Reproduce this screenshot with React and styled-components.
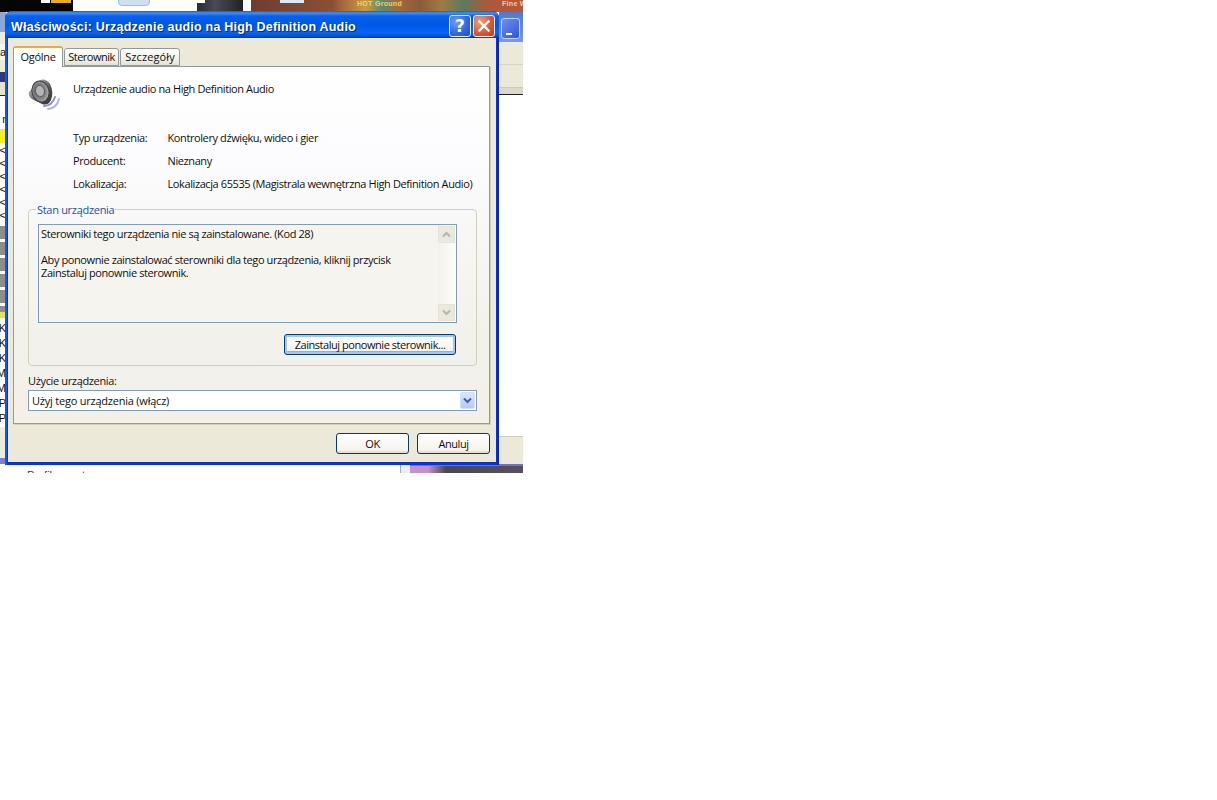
import React from "react";
import styled, { createGlobalStyle } from "styled-components";

const Global = createGlobalStyle`
  html, body { margin: 0; padding: 0; background: #fff; }
  body { font-family: "Liberation Sans", Arial, sans-serif; }
`;

const UI = `"Open Sans", "Liberation Sans", Arial, sans-serif`;

const Desktop = styled.div`
  position: relative;
  width: 523px;
  height: 473px;
  overflow: hidden;
  display: flex;
  flex-direction: column;
  background: #fff;
`;

const TopStrip = styled.div`
  height: 12px;
  flex: none;
  display: flex;
`;
const TopSegment = styled.div`
  width: ${(p) => p.$w}px;
  flex: none;
  background: ${(p) => p.$bg};
  position: relative;
  overflow: hidden;
`;
const Pill = styled.div`
  position: absolute;
  left: 45px;
  top: -4px;
  width: 30px;
  height: 8px;
  border-radius: 4px;
  background: #cfe0f2;
  border: 1px solid #9fbfe0;
`;
const WhiteBit = styled.div`
  position: absolute;
  left: ${(p) => p.$x}px;
  top: 0;
  width: ${(p) => p.$w}px;
  height: 3px;
  background: ${(p) => p.$c || "#fff"};
`;
const PosterText = styled.span`
  position: absolute;
  left: ${(p) => p.$x}px;
  top: 0;
  font: bold 7px "Liberation Sans", sans-serif;
  letter-spacing: 0.3px;
  color: ${(p) => p.$c};
  white-space: nowrap;
`;

const Middle = styled.div`
  flex: 1;
  display: flex;
  justify-content: space-between;
  min-height: 0;
`;
const LeftSliver = styled.div`
  width: 6px;
  display: flex;
  flex-direction: column;
  overflow: hidden;
`;
const SliverRow = styled.div`
  height: ${(p) => p.$h}px;
  flex: none;
  background: ${(p) => p.$bg || "#fff"};
  display: flex;
  justify-content: flex-end;
  align-items: center;
  overflow: hidden;
  font: 11px "Liberation Sans", sans-serif;
  color: #111;
`;
const RightSliver = styled.div`
  width: 24px;
  display: flex;
  flex-direction: column;
`;
const RightBand = styled.div`
  box-sizing: border-box;
  height: ${(p) => p.$h}px;
  flex: none;
  background: ${(p) => p.$bg};
  border-bottom: ${(p) => (p.$line ? `1px solid ${p.$line}` : "none")};
  position: relative;
`;
const BackMinimize = styled.div`
  position: absolute;
  left: 2px;
  top: 6px;
  width: 17px;
  height: 19px;
  border: 1px solid #c4d3f4;
  border-radius: 3px;
  background: linear-gradient(135deg, #6f8ff0, #2f56d8);
  &::after {
    content: "";
    position: absolute;
    left: 4px;
    bottom: 3px;
    width: 6px;
    height: 2px;
    background: #fff;
  }
`;

const BottomStrip = styled.div`
  height: 9px;
  flex: none;
  display: flex;
  align-items: stretch;
`;
const BottomLeft = styled.div`
  width: 401px;
  flex: none;
  padding: 4px 0 0 27px;
  box-sizing: border-box;
  overflow: hidden;
  border-right: 1px solid #aaa;
  font: 11px/14px "Liberation Sans", sans-serif;
  color: #1a3d8f;
`;
const BottomGap = styled.div`
  width: 9px;
  flex: none;
  background: #efeee8;
`;
const BottomPhoto = styled.div`
  flex: 1;
  border-top: 2px solid #6f6fd0;
  background: linear-gradient(90deg, #c590c8 0, #c590c8 18px, #4a4650 36px, #55525a 100%);
`;

const Dialog = styled.section`
  position: absolute;
  left: 5px;
  top: 11px;
  width: 494px;
  height: 454px;
  box-sizing: border-box;
  border-radius: 7px 7px 0 0;
  background: #0831d9;
  padding: 0 3px 3px;
  display: flex;
  flex-direction: column;
  box-shadow: inset 2px 0 0 #1656e6, inset -2px 0 0 #0a2aa8;
`;
const TitleBar = styled.header`
  height: 27px;
  flex: none;
  margin: 0 -3px;
  padding: 0 4px 0 6px;
  border-radius: 7px 7px 0 0;
  display: flex;
  align-items: center;
  gap: 2px;
  background: linear-gradient(180deg, #0a5be4 0, #3a93ff 2px, #0a60ec 5px, #0058e6 50%, #0066f8 80%, #0a50d8 92%, #003bb8 100%);
`;
const Title = styled.h1`
  flex: 1;
  margin: 4px 0 0;
  font: bold 12.5px "Liberation Sans", sans-serif;
  letter-spacing: 0.21px;
  color: #fff;
  text-shadow: 1px 1px 1px #0a1f80;
  white-space: nowrap;
`;
const CaptionButton = styled.button`
  width: 22px;
  height: 22px;
  margin: 2px 0 0;
  padding: 0;
  border: 1px solid #e8eefc;
  border-radius: 3px;
  display: flex;
  align-items: center;
  justify-content: center;
  background: ${(p) =>
    p.$danger
      ? "radial-gradient(circle at 30% 30%, #f0a080, #dc5a32 55%, #c03a18)"
      : "radial-gradient(circle at 30% 30%, #6f9cf5, #2f66e0 60%, #1f50cc)"};
  color: #fff;
  font: bold 17px "DejaVu Sans", sans-serif;
`;

const DialogBody = styled.div`
  flex: 1;
  min-height: 0;
  padding: 8px 6px 8px 5px;
  background: #ece9d8;
  display: flex;
  flex-direction: column;
`;
const Tabs = styled.div`
  display: flex;
  align-items: flex-end;
  height: 20px;
  gap: 1px;
  flex: none;
  position: relative;
  z-index: 1;
`;
const Tab = styled.div`
  box-sizing: border-box;
  height: ${(p) => (p.$active ? 21 : 18)}px;
  width: ${(p) => p.$w}px;
  padding-bottom: ${(p) => (p.$active ? 3 : 1)}px;
  margin-bottom: ${(p) => (p.$active ? -1 : 0)}px;
  border: 1px solid #919b9c;
  border-bottom: ${(p) => (p.$active ? "none" : "1px solid #919b9c")};
  border-top: ${(p) => (p.$active ? "2px solid #f2a83a" : "1px solid #919b9c")};
  border-radius: 3px 3px 0 0;
  background: ${(p) => (p.$active ? "#fff" : "linear-gradient(180deg,#fff,#f0efe6 70%,#e4e2d4)")};
  display: flex;
  align-items: center;
  justify-content: center;
  font: 11px ${UI};
  letter-spacing: ${(p) => p.$ls};
  color: #111;
`;
const Panel = styled.div`
  box-sizing: border-box;
  height: 358px;
  flex: none;
  border: 1px solid #919b9c;
  box-shadow: 1px 1px 0 #d0cdbc;
  background: linear-gradient(180deg, #fff 0, #fcfcfe 25%, #f3f1eb 75%, #f2f0e9 100%);
  padding: 10px 12px 0 14px;
  display: flex;
  flex-direction: column;
`;
const Header = styled.div`
  display: flex;
  align-items: flex-start;
  gap: 11px;
  height: 34px;
  flex: none;
  font: 11px/14px ${UI};
  color: #111;
  letter-spacing: -0.4px;
`;
const HeaderName = styled.span`
  margin-top: 5px;
`;
const Props = styled.dl`
  margin: 15px 0 0 45px;
  display: grid;
  grid-template-columns: 94.5px 1fr;
  grid-auto-rows: 23px;
  flex: none;
  font: 11px/23px ${UI};
  letter-spacing: -0.4px;
  color: #111;
`;
const Term = styled.dt`
  margin: 0;
`;
const Value = styled.dd`
  margin: 0;
  white-space: nowrap;
`;
const Group = styled.fieldset`
  margin: 7px 0 0;
  padding: 0 20px 10px 9px;
  height: 164px;
  flex: none;
  box-sizing: border-box;
  border: 1px solid #d0d0bf;
  border-radius: 4px;
  min-width: 0;
  width: 449px;
  display: flex;
  flex-direction: column;
  align-items: flex-end;
`;
const Legend = styled.legend`
  padding: 0 1px;
  margin-left: -2px;
  font: 11px ${UI};
  letter-spacing: -0.3px;
  color: #1f4fa8;
`;
const StatusBox = styled.div`
  box-sizing: border-box;
  width: 419px;
  height: 99px;
  flex: none;
  margin-top: 7px;
  border: 1px solid #7f9db9;
  background: #f5f4ef;
  display: flex;
  align-self: flex-start;
`;
const StatusText = styled.p`
  flex: 1;
  margin: 2px 0 0 2px;
  font: 11px/13px ${UI};
  letter-spacing: -0.4px;
  color: #111;
`;
const ScrollTrack = styled.div`
  width: 18px;
  flex: none;
  display: flex;
  flex-direction: column;
  justify-content: space-between;
  background: linear-gradient(90deg, #f3f2ec, #fdfdfa);
  padding: 1px 0;
`;
const ScrollButton = styled.div`
  height: 17px;
  width: 17px;
  border: 1px solid #e6e4da;
  box-sizing: border-box;
  background: #ebe9de;
  display: flex;
  align-items: center;
  justify-content: center;
`;
const XpButton = styled.button`
  box-sizing: border-box;
  width: ${(p) => p.$w}px;
  height: 21px;
  flex: none;
  padding: 0;
  border: 1px solid #003c74;
  border-radius: 3px;
  background: linear-gradient(180deg, #fff, #f4f3ee 85%, #dcd8cc);
  box-shadow: ${(p) => (p.$def ? "inset 0 0 0 2px #a9c4ec, inset 0 -1px 0 2px #8cb0e4" : "none")};
  font: 11px ${UI};
  letter-spacing: -0.45px;
  color: #111;
`;
const InstallButton = styled(XpButton)`
  margin-top: 11px;
`;
const FieldLabel = styled.label`
  display: block;
  margin-top: 7px;
  height: 17px;
  flex: none;
  font: 11px/16px ${UI};
  letter-spacing: -0.35px;
  color: #111;
`;
const Select = styled.div`
  box-sizing: border-box;
  width: 449px;
  height: 21px;
  flex: none;
  border: 1px solid #7f9db9;
  background: #fff;
  display: flex;
  align-items: center;
  justify-content: space-between;
  padding: 0 1px 0 3px;
  font: 11px ${UI};
  letter-spacing: -0.22px;
  color: #111;
`;
const SelectArrow = styled.div`
  width: 15px;
  height: 17px;
  border: 1px solid #d3def7;
  box-sizing: border-box;
  border-radius: 2px;
  background: linear-gradient(180deg, #dbe6fc, #b4c9f4);
  display: flex;
  align-items: center;
  justify-content: center;
`;
const Actions = styled.footer`
  margin-top: 9px;
  display: flex;
  justify-content: flex-end;
  gap: 8px;
`;

const SpeakerIcon = () => (
  <svg width="34" height="34" viewBox="0 0 34 34" aria-hidden="true">
    <defs>
      <radialGradient id="cone" cx="0.42" cy="0.45" r="0.6">
        <stop offset="0" stopColor="#cfcfcf" />
        <stop offset="0.4" stopColor="#6e6e6e" />
        <stop offset="0.72" stopColor="#8c8c8c" />
        <stop offset="1" stopColor="#bcbcbc" />
      </radialGradient>
      <linearGradient id="body" x1="0" y1="0" x2="1" y2="1">
        <stop offset="0" stopColor="#e2e2e2" />
        <stop offset="0.6" stopColor="#555" />
        <stop offset="1" stopColor="#2e2e2e" />
      </linearGradient>
    </defs>
    <path d="M1 15 L12 3 Q18 1 22 7 Q26 15 23 23 Q20 29 14 27 L4 22 Q0 19 1 15Z" fill="url(#body)" />
    <ellipse cx="12.5" cy="14.5" rx="8.5" ry="10.5" transform="rotate(-15 12.5 14.5)" fill="url(#cone)" stroke="#3e3e3e" strokeWidth="1" />
    <ellipse cx="12" cy="14" rx="4.4" ry="5.6" transform="rotate(-15 12 14)" fill="#b4b4b8" stroke="#555" strokeWidth="0.8" />
    <path d="M16 29 Q24 29 27 20" fill="none" stroke="#8f8fd0" strokeWidth="2" strokeLinecap="round" />
    <path d="M20 32 Q29 31 31 22" fill="none" stroke="#b4b4e4" strokeWidth="2" strokeLinecap="round" />
  </svg>
);

const Chevron = ({ up, color = "#b8b5a8" }) => (
  <svg width="9" height="7" viewBox="0 0 9 7" aria-hidden="true">
    <path d={up ? "M1 5.5 L4.5 2 L8 5.5" : "M1 1.5 L4.5 5 L8 1.5"} fill="none" stroke={color} strokeWidth="2" />
  </svg>
);

const CloseGlyph = () => (
  <svg width="14" height="14" viewBox="0 0 14 14" aria-hidden="true">
    <path d="M2.5 2.5 L11.5 11.5 M11.5 2.5 L2.5 11.5" stroke="#fff" strokeWidth="2.4" strokeLinecap="square" />
  </svg>
);

const grey = "#8e8e88";
const leftRows = [
  { h: 20, bg: "#8fa6d8" },
  { h: 12, bg: "#ecebdf" },
  { h: 16, bg: "#f6f5ee", t: "a" },
  { h: 12, bg: "#ece9d8" },
  { h: 10, bg: "#2c3a80" },
  { h: 13, bg: "#e8e4c8" },
  { h: 1, bg: "#222" },
  { h: 16 },
  { h: 14, t: "r" },
  { h: 3 },
  { h: 14, bg: "#f5ee20" },
  { h: 13, t: "<" },
  { h: 13, t: "<" },
  { h: 13, t: "<" },
  { h: 13, t: "<" },
  { h: 13, t: "<" },
  { h: 13, t: "<" },
  { h: 5 },
  { h: 13, bg: grey },
  { h: 3 },
  { h: 13, bg: grey },
  { h: 3 },
  { h: 13, bg: grey },
  { h: 3 },
  { h: 13, bg: grey },
  { h: 3 },
  { h: 13, bg: grey },
  { h: 3 },
  { h: 6, bg: grey },
  { h: 6, bg: "#e4e060" },
  { h: 2 },
  { h: 15, t: "K" },
  { h: 15, t: "K" },
  { h: 15, t: "K" },
  { h: 15, t: "M" },
  { h: 15, t: "M" },
  { h: 15, t: "P" },
  { h: 15, t: "P" },
  { h: 2 },
  { h: 31, bg: "#ecebdf" },
  { h: 6, bg: "#7a82d0" },
];

const rightBands = [
  { h: 30, bg: "linear-gradient(180deg,#4a78e0,#7a98e8)", min: true },
  { h: 23, bg: "#ece9d8", line: "#d8d4c0" },
  { h: 23, bg: "#ece9d8", line: "#cfcbb8" },
  { h: 7, bg: "#ddd9c6", line: "#222" },
  { h: 342, bg: "#fff", line: "#cfcdc0" },
  { h: 27, bg: "#ece9d8" },
];

export default function App() {
  return (
    <>
      <Global />
      <Desktop>
        <TopStrip>
          <TopSegment $w={73} $bg="#050505">
            <WhiteBit $x={41} $w={9} />
            <WhiteBit $x={51} $w={20} $c="#e8b020" />
          </TopSegment>
          <TopSegment $w={124} $bg="#fdfdfd">
            <Pill />
          </TopSegment>
          <TopSegment $w={46} $bg="linear-gradient(90deg,#2a2a34,#4a4a58 40%,#222)">
            <WhiteBit $x={0} $w={8} />
          </TopSegment>
          <TopSegment $w={8} $bg="#fff" />
          <TopSegment
            $w={272}
            $bg="linear-gradient(90deg,#6e3c30 0,#8a5034 30%,#a86a3c 34%,#c89a40 42%,#5a8a70 48%,#a46a3c 54%,#8a5a3a 62%,#a07a40 70%,#5a7a60 78%,#a85a3a 86%,#b8583a 100%)"
          >
            <WhiteBit $x={29} $w={24} $c="#dfe6f4" />
            <PosterText $x={106} $c="#f2d060">HOT Ground</PosterText>
            <PosterText $x={251} $c="#f0d0a0">Fine W</PosterText>
          </TopSegment>
        </TopStrip>
        <Middle>
          <LeftSliver>
            {leftRows.map((r, i) => (
              <SliverRow key={i} $h={r.h} $bg={r.bg}>
                {r.t}
              </SliverRow>
            ))}
          </LeftSliver>
          <RightSliver>
            {rightBands.map((b, i) => (
              <RightBand key={i} $h={b.h} $bg={b.bg} $line={b.line}>
                {b.min && <BackMinimize />}
              </RightBand>
            ))}
          </RightSliver>
        </Middle>
        <BottomStrip>
          <BottomLeft>Profil sprzętu</BottomLeft>
          <BottomGap />
          <BottomPhoto />
        </BottomStrip>

        <Dialog>
          <TitleBar>
            <Title>Właściwości: Urządzenie audio na High Definition Audio</Title>
            <CaptionButton aria-label="Pomoc">?</CaptionButton>
            <CaptionButton $danger aria-label="Zamknij">
              <CloseGlyph />
            </CaptionButton>
          </TitleBar>
          <DialogBody>
            <Tabs>
              <Tab $active $w={50} $ls="-0.3px">Ogólne</Tab>
              <Tab $w={55} $ls="-0.5px">Sterownik</Tab>
              <Tab $w={60} $ls="0.1px">Szczegóły</Tab>
            </Tabs>
            <Panel>
              <Header>
                <SpeakerIcon />
                <HeaderName>Urządzenie audio na High Definition Audio</HeaderName>
              </Header>
              <Props>
                <Term>Typ urządzenia:</Term>
                <Value>Kontrolery dźwięku, wideo i gier</Value>
                <Term>Producent:</Term>
                <Value>Nieznany</Value>
                <Term>Lokalizacja:</Term>
                <Value>Lokalizacja 65535 (Magistrala wewnętrzna High Definition Audio)</Value>
              </Props>
              <Group>
                <Legend>Stan urządzenia</Legend>
                <StatusBox>
                  <StatusText>
                    Sterowniki tego urządzenia nie są zainstalowane. (Kod 28)
                    <br />
                    <br />
                    Aby ponownie zainstalować sterowniki dla tego urządzenia, kliknij przycisk
                    <br />
                    Zainstaluj ponownie sterownik.
                  </StatusText>
                  <ScrollTrack>
                    <ScrollButton><Chevron up /></ScrollButton>
                    <ScrollButton><Chevron /></ScrollButton>
                  </ScrollTrack>
                </StatusBox>
                <InstallButton $w={172} $def>Zainstaluj ponownie sterownik...</InstallButton>
              </Group>
              <FieldLabel>Użycie urządzenia:</FieldLabel>
              <Select>
                Użyj tego urządzenia (włącz)
                <SelectArrow><Chevron color="#44609c" /></SelectArrow>
              </Select>
            </Panel>
            <Actions>
              <XpButton $w={73}>OK</XpButton>
              <XpButton $w={73}>Anuluj</XpButton>
            </Actions>
          </DialogBody>
        </Dialog>
      </Desktop>
    </>
  );
}
